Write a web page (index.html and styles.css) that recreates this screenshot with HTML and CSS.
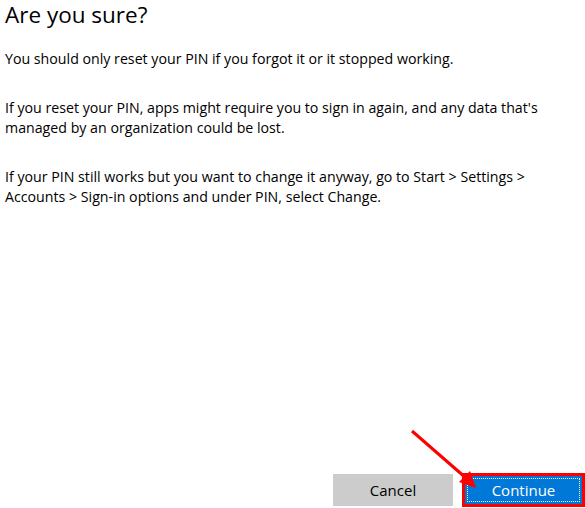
FILE: index.html
```html
<!DOCTYPE html>
<html lang="en">
<head>
    <meta charset="UTF-8">
    <meta name="viewport" content="width=device-width, initial-scale=1.0">
    <title>Are you sure?</title>
    <link rel="stylesheet" href="styles.css">
</head>
<body>
    <div class="dialog">
        <div class="content">
            <h1>Are you sure?</h1>
            <p>You should only reset your PIN if you forgot it or it stopped working.</p>
            <p>If you reset your PIN, apps might require you to sign in again, and any data that's managed by an organization could be lost.</p>
            <p>If your PIN still works but you want to change it anyway, go to Start &gt; Settings &gt; Accounts &gt; Sign-in options and under PIN, select Change.</p>
        </div>

        <!-- Knoppen -->
        <div class="buttons">
            <button class="btn btn-cancel">Cancel</button>
            <div class="highlight">
                <button class="btn btn-primary">Continue</button>
            </div>
        </div>
    </div>

    <!-- Annotatie pijl -->
    <svg class="arrow" width="585" height="508" viewBox="0 0 585 508">
        <line x1="412" y1="431" x2="466" y2="478" stroke="#f00" stroke-width="3"/>
        <polygon points="476,488 459,482 470,471" fill="#f00"/>
    </svg>
</body>
</html>
```

FILE: styles.css
```css
body {
    font-family: "Open Sans", "Noto Sans", sans-serif;
    background-color: #ffffff;
    color: #000000;
    margin: 0;
    width: 585px;
    height: 508px;
    overflow: hidden;
}
.dialog {
    display: flex;
    flex-direction: column;
    height: 508px;
}
.content {
    flex-grow: 1;
    padding: 1px 5px 0 5px;
}
h1 {
    font-size: 22.5px;
    font-weight: 400;
    line-height: 27px;
    margin: 0 0 21px 0;
}
p {
    font-size: 14.2px;
    line-height: 20px;
    margin: 0 0 29px 0;
}
.buttons {
    display: flex;
    justify-content: flex-end;
    align-items: center;
    gap: 9px;
    padding-bottom: 1px;
}
.btn {
    font-family: inherit;
    font-size: 15px;
    width: 120px;
    height: 32px;
    border: none;
    padding: 0;
    cursor: pointer;
}
.btn-cancel {
    background-color: #cccccc;
    color: #000;
}
.highlight {
    border: 3px solid #ff0000;
    display: flex;
}
.btn-primary {
    width: 117px;
    height: 28px;
    background-color: #0078d7;
    color: #fff;
    outline: 1px dotted #fff;
    outline-offset: -3px;
}
.arrow {
    position: absolute;
    left: 0;
    top: 0;
    pointer-events: none;
}
```
